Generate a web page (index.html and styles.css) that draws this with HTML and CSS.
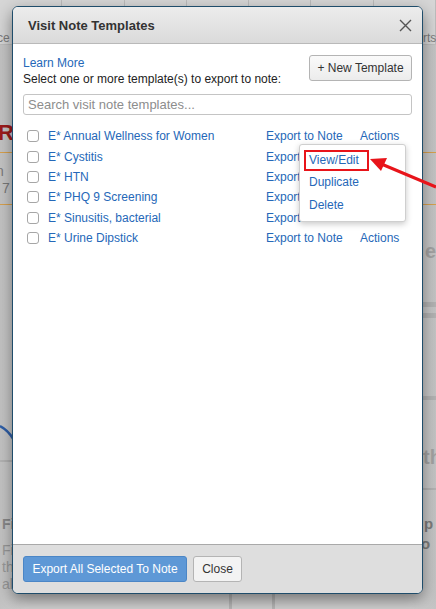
FILE: index.html
```html
<!DOCTYPE html>
<html>
<head>
<meta charset="utf-8">
<link rel="stylesheet" href="styles.css">
</head>
<body>
<div class="backdrop">
  <div class="toolbar">
    <span class="tb-cell"></span><span class="tb-cell"></span><span class="tb-cell"></span><span class="tb-cell"></span><span class="tb-cell"></span><span class="tb-cell"></span><span class="tb-cell"></span>
  </div>
  <span class="bg-text bg-tb-left">ce</span>
  <span class="bg-text bg-tb-right">rts</span>
  <span class="bg-R">R</span>
  <span class="bg-line orange l1"></span>
  <span class="bg-line orange l2"></span>
  <span class="bg-line orange r1"></span>
  <span class="bg-line orange r2"></span>
  <span class="bg-text bg-n">n</span>
  <span class="bg-text bg-7">7</span>
  <span class="bg-text bg-e">e</span>
  <span class="bg-bar b1"></span>
  <span class="bg-bar b2"></span>
  <span class="bg-bar b3"></span>
  <span class="bg-bar b4"></span>
  <span class="bg-bar b5"></span>
  <span class="bg-text bg-th">th</span>
  <span class="bg-text bg-fi">Fi</span>
  <span class="bg-small bg-fi2">Fi<br>th<br>al</span>
  <span class="bg-text bg-p">p</span>
  <span class="bg-text bg-o">o</span>
  <svg class="bg-curve" width="14" height="30" viewBox="0 0 14 30"><path d="M0 8 Q8 12 14 22" stroke="#2f5fa8" stroke-width="2.5" fill="none"/></svg>
  <span class="bg-vline v1"></span>
  <span class="bg-vline v2"></span>
</div>

<div class="modal">
  <div class="modal-header">
    <h1 class="modal-title">Visit Note Templates</h1>
    <svg class="close-x" width="13" height="13" viewBox="0 0 13 13"><path d="M1 1 L12 12 M12 1 L1 12" stroke="#555" stroke-width="1.4" fill="none"/></svg>
  </div>
  <div class="modal-body">
    <div class="intro">
      <div class="intro-text">
        <a class="link">Learn More</a>
        <div class="instr">Select one or more template(s) to export to note:</div>
      </div>
      <button class="btn btn-default new-btn">+ New Template</button>
    </div>
    <div class="search">Search visit note templates...</div>
    <ul class="list">
      <li class="row"><span class="cb"></span><a class="name">E* Annual Wellness for Women</a><a class="export">Export to Note</a><a class="actions">Actions</a></li>
      <li class="row"><span class="cb"></span><a class="name">E* Cystitis</a><a class="export">Export to Note</a><a class="actions">Actions</a></li>
      <li class="row"><span class="cb"></span><a class="name">E* HTN</a><a class="export">Export to Note</a><a class="actions">Actions</a></li>
      <li class="row"><span class="cb"></span><a class="name">E* PHQ 9 Screening</a><a class="export">Export to Note</a><a class="actions">Actions</a></li>
      <li class="row"><span class="cb"></span><a class="name">E* Sinusitis, bacterial</a><a class="export">Export to Note</a><a class="actions">Actions</a></li>
      <li class="row"><span class="cb"></span><a class="name">E* Urine Dipstick</a><a class="export">Export to Note</a><a class="actions">Actions</a></li>
    </ul>
    <div class="menu">
      <a class="menu-item highlight">View/Edit</a>
      <a class="menu-item">Duplicate</a>
      <a class="menu-item">Delete</a>
    </div>
  </div>
  <div class="modal-footer">
    <button class="btn btn-primary">Export All Selected To Note</button>
    <button class="btn btn-default">Close</button>
  </div>
</div>

<svg class="arrow" width="70" height="40" viewBox="0 0 70 40"><path d="M67 31 L10 7" stroke="#e8141a" stroke-width="3" fill="none"/><polygon points="1,3 18,2 12,15" fill="#e8141a"/></svg>
</body>
</html>
```
FILE: styles.css
```css
* { box-sizing: border-box; }
html, body { margin: 0; padding: 0; }
body {
  width: 436px;
  height: 609px;
  overflow: hidden;
  position: relative;
  background: #cdcdcd;
  font-family: "Liberation Sans", Arial, Helvetica, sans-serif;
  font-size: 12px;
  color: #222;
}

/* ---------- dimmed page behind the modal ---------- */
.backdrop { position: absolute; inset: 0; background: linear-gradient(90deg, #c4c4c4 0, #d2d2d2 6%, #d2d2d2 94%, #c4c4c4 100%); }
.toolbar { display: flex; height: 45px; background: #d6d6d6; border-bottom: 1px solid #bdbdbd; }
.tb-cell { flex: 1; border-right: 1px solid #bcbcbc; }
.bg-text { position: absolute; color: #8e8e8e; font-size: 16px; font-weight: bold; }
.bg-small { position: absolute; color: #9a9a9a; font-size: 14px; line-height: 17px; }
.bg-tb-left { left: -3px; top: 31px; font-size: 12px; font-weight: normal; color: #7d7d7d; }
.bg-tb-right { left: 423px; top: 31px; font-size: 12px; font-weight: normal; color: #7d7d7d; }
.bg-R { position: absolute; left: -2px; top: 120px; color: #9e1b1b; font-size: 22px; font-weight: bold; }
.bg-line { position: absolute; height: 1px; }
.orange { background: #d9a24e; }
.l1 { left: 0; width: 13px; top: 152px; }
.l2 { left: 0; width: 13px; top: 204px; }
.r1 { left: 423px; width: 13px; top: 152px; }
.r2 { left: 423px; width: 13px; top: 204px; }
.bg-n { left: -4px; top: 163px; font-weight: normal; font-size: 14px; color: #7a7a7a; }
.bg-7 { left: 2px; top: 180px; font-weight: normal; font-size: 14px; color: #7a7a7a; }
.bg-e { left: 425px; top: 240px; font-size: 20px; color: #a4a4a4; }
.bg-bar { position: absolute; background: #b4b4b4; }
.b1 { left: 423px; width: 13px; top: 302px; height: 5px; }
.b2 { left: 423px; width: 13px; top: 313px; height: 5px; }
.b3 { left: 423px; width: 13px; top: 396px; height: 4px; }
.b4 { left: 423px; width: 13px; top: 488px; height: 2px; }
.b5 { left: 0; width: 13px; top: 460px; height: 2px; }
.bg-th { left: 423px; top: 446px; font-size: 20px; color: #a4a4a4; }
.bg-fi { left: 2px; top: 516px; font-size: 14px; color: #8a8a8a; }
.bg-fi2 { left: 2px; top: 542px; }
.bg-p { left: 424px; top: 515px; font-size: 15px; color: #7d7d7d; }
.bg-o { left: 421px; top: 535px; font-size: 15px; color: #7d7d7d; }
.bg-curve { position: absolute; left: 0; top: 418px; }
.bg-vline { position: absolute; top: 594px; width: 3px; height: 15px; background: #b8b8b8; }
.v1 { left: 229px; }
.v2 { left: 272px; }

/* ---------- modal ---------- */
.modal {
  position: absolute;
  left: 12px;
  top: 6px;
  width: 411px;
  height: 588px;
  background: #fff;
  border: 1px solid #1f4d6b;
  border-radius: 6px;
  box-shadow: 0 6px 16px rgba(0,0,0,.45);
  display: flex;
  flex-direction: column;
  overflow: hidden;
}
.modal-header {
  height: 37px;
  flex: none;
  display: flex;
  align-items: center;
  justify-content: space-between;
  padding: 0 10px 0 15px;
  background: linear-gradient(#ececec, #dadada);
  border-bottom: 1px solid #b9b9b9;
}
.modal-title { margin: 0; font-size: 13px; font-weight: bold; color: #333; }
.close-x { display: block; margin-top: 1px; }

.modal-body { flex: 1; position: relative; padding: 11px 10px 0 10px; }
.intro { display: flex; justify-content: space-between; align-items: flex-start; }
.intro-text { padding-top: 1px; }
.link { display: block; color: #2568b8; line-height: 15px; }
.instr { line-height: 15px; margin-top: 1px; color: #222; }

.btn {
  font-family: inherit;
  font-size: 12px;
  height: 26px;
  padding: 0 8px;
  border-radius: 3px;
  white-space: nowrap;
  cursor: pointer;
}
.btn-default { background: linear-gradient(#fafafa, #ececec); border: 1px solid #b4b4b4; color: #333; }
.btn-primary { background: #5e98d6; border: 1px solid #4b86c6; color: #fff; }
.new-btn { width: 103px; padding: 0; }

.search {
  margin-top: 7px;
  height: 21px;
  border: 1px solid #c4c4c4;
  border-radius: 3px;
  padding: 2px 4px;
  color: #8d8d8d;
  font-size: 13px;
  line-height: 15px;
}

.list { list-style: none; margin: 11px 0 0 0; padding: 0; }
.row { display: flex; align-items: center; height: 20.4px; padding-left: 4px; }
.cb {
  width: 12px; height: 12px; flex: none;
  border: 1px solid #a6a6a6; border-radius: 3px; background: #fff;
  margin-right: 9px;
}
.name { color: #2568b8; width: 218px; }
.export { color: #2568b8; width: 94px; }
.actions { color: #2568b8; }

.menu {
  position: absolute;
  left: 286px;
  top: 100px;
  width: 107px;
  height: 78px;
  background: #fff;
  border: 1px solid #cfcfcf;
  border-radius: 3px;
  box-shadow: 0 2px 6px rgba(0,0,0,.22);
  padding: 5px 0 0 4px;
  display: flex;
  flex-direction: column;
}
.menu-item { color: #2568b8; padding: 0 0 0 5px; height: 23px; line-height: 23px; flex: none; }
.menu-item.highlight { border: 2.5px solid #e8141a; width: 65px; height: 21px; line-height: 16px; padding-left: 3px; margin-bottom: 0; }

.modal-footer {
  height: 49px;
  flex: none;
  background: #dedede;
  border-top: 1px solid #a9a9a9;
  padding: 11px 10px 0 10px;
  display: flex;
  gap: 6px;
  align-items: flex-start;
}
.modal-footer .btn-primary { width: 164px; }
.modal-footer .btn-default { width: 49px; background: #f3f3f3; }

.arrow { position: absolute; left: 369px; top: 156px; }
```
